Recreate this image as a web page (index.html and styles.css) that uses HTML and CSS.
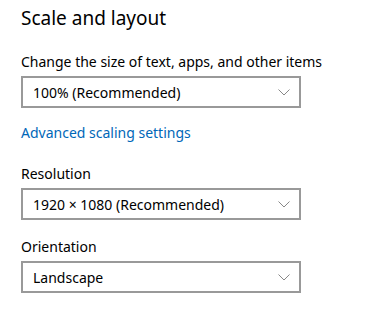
FILE: index.html
```html
<!DOCTYPE html>
<html lang="en">
<head>
    <meta charset="UTF-8">
    <title>Scale and layout</title>
    <link rel="stylesheet" href="styles.css">
</head>
<body>
    <div class="settings">
        <h2 class="title">Scale and layout</h2>

        <div class="field">
            <div class="label">Change the size of text, apps, and other items</div>
            <div class="select">
                <span>100% (Recommended)</span>
                <svg class="chevron" width="12" height="7" viewBox="0 0 12 7"><path d="M0.5 0.5 L6 6 L11.5 0.5" fill="none" stroke="#888" stroke-width="1"/></svg>
            </div>
        </div>

        <a class="link" href="#">Advanced scaling settings</a>

        <div class="field">
            <div class="label">Resolution</div>
            <div class="select">
                <span>1920 × 1080 (Recommended)</span>
                <svg class="chevron" width="12" height="7" viewBox="0 0 12 7"><path d="M0.5 0.5 L6 6 L11.5 0.5" fill="none" stroke="#888" stroke-width="1"/></svg>
            </div>
        </div>

        <div class="field field-tight">
            <div class="label">Orientation</div>
            <div class="select">
                <span>Landscape</span>
                <svg class="chevron" width="12" height="7" viewBox="0 0 12 7"><path d="M0.5 0.5 L6 6 L11.5 0.5" fill="none" stroke="#888" stroke-width="1"/></svg>
            </div>
        </div>
    </div>
</body>
</html>
```

FILE: styles.css
```css
body {
    margin: 0;
    background: #fff;
    font-family: "Noto Sans", Arial, sans-serif;
    color: #000;
}
.settings {
    padding: 5px 0 0 21px;
}
.title {
    margin: 0;
    font-size: 19px;
    font-weight: 400;
    line-height: 26px;
}
.field {
    margin-top: 21px;
}
.field-tight {
    margin-top: 17px;
}
.label {
    font-size: 14px;
    line-height: 20px;
    margin-bottom: 4px;
}
.select {
    width: 280px;
    height: 32px;
    box-sizing: border-box;
    border: 2px solid #999;
    display: flex;
    align-items: center;
    justify-content: space-between;
    padding: 0 9px 0 10px;
    font-size: 14px;
}
.link {
    display: block;
    margin-top: 15px;
    font-size: 14px;
    line-height: 20px;
    color: #0067b8;
    text-decoration: none;
}
```
